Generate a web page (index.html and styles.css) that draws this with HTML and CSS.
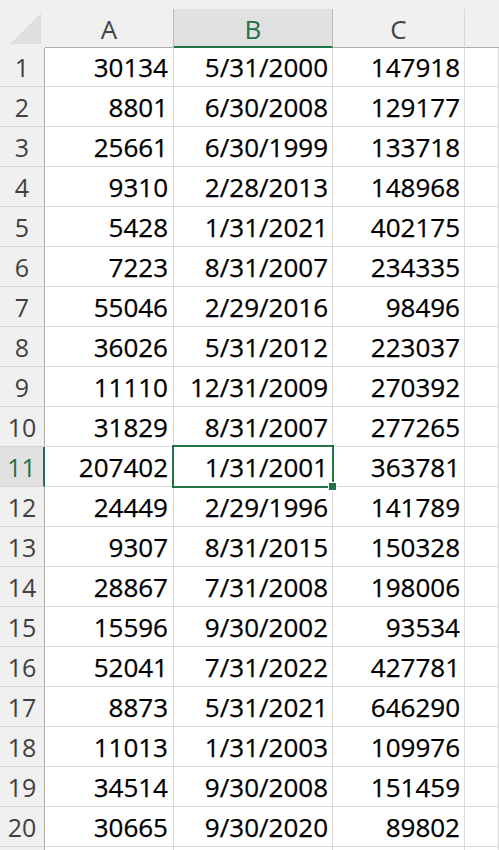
FILE: index.html
```html
<!DOCTYPE html>
<html lang="en">
<head>
<meta charset="utf-8">
<title>Sheet</title>
<link rel="stylesheet" href="styles.css">
</head>
<body>
<div class="sheet">
  <div class="row head">
    <div class="corner"><svg width="45" height="48" viewBox="0 0 45 48"><polygon points="41,13 41,44 10,44" fill="#dfdfdf"/></svg></div>
    <div class="colhead"><div class="hl sep-dark">A</div></div>
    <div class="colhead"><div class="hl sel sep-dark">B</div></div>
    <div class="colhead"><div class="hl">C</div></div>
    <div class="colhead"><div class="hl none"></div></div>
  </div>
  <div class="row first"><div class="rh">1</div><div class="c">30134</div><div class="c">5/31/2000</div><div class="c">147918</div><div class="c"></div></div>
  <div class="row"><div class="rh">2</div><div class="c">8801</div><div class="c">6/30/2008</div><div class="c">129177</div><div class="c"></div></div>
  <div class="row"><div class="rh">3</div><div class="c">25661</div><div class="c">6/30/1999</div><div class="c">133718</div><div class="c"></div></div>
  <div class="row"><div class="rh">4</div><div class="c">9310</div><div class="c">2/28/2013</div><div class="c">148968</div><div class="c"></div></div>
  <div class="row"><div class="rh">5</div><div class="c">5428</div><div class="c">1/31/2021</div><div class="c">402175</div><div class="c"></div></div>
  <div class="row"><div class="rh">6</div><div class="c">7223</div><div class="c">8/31/2007</div><div class="c">234335</div><div class="c"></div></div>
  <div class="row"><div class="rh">7</div><div class="c">55046</div><div class="c">2/29/2016</div><div class="c">98496</div><div class="c"></div></div>
  <div class="row"><div class="rh">8</div><div class="c">36026</div><div class="c">5/31/2012</div><div class="c">223037</div><div class="c"></div></div>
  <div class="row"><div class="rh">9</div><div class="c">11110</div><div class="c">12/31/2009</div><div class="c">270392</div><div class="c"></div></div>
  <div class="row"><div class="rh">10</div><div class="c">31829</div><div class="c">8/31/2007</div><div class="c">277265</div><div class="c"></div></div>
  <div class="row"><div class="rh active">11</div><div class="c">207402</div><div class="c selected">1/31/2001</div><div class="c">363781</div><div class="c"></div></div>
  <div class="row"><div class="rh">12</div><div class="c">24449</div><div class="c">2/29/1996</div><div class="c">141789</div><div class="c"></div></div>
  <div class="row"><div class="rh">13</div><div class="c">9307</div><div class="c">8/31/2015</div><div class="c">150328</div><div class="c"></div></div>
  <div class="row"><div class="rh">14</div><div class="c">28867</div><div class="c">7/31/2008</div><div class="c">198006</div><div class="c"></div></div>
  <div class="row"><div class="rh">15</div><div class="c">15596</div><div class="c">9/30/2002</div><div class="c">93534</div><div class="c"></div></div>
  <div class="row"><div class="rh">16</div><div class="c">52041</div><div class="c">7/31/2022</div><div class="c">427781</div><div class="c"></div></div>
  <div class="row"><div class="rh">17</div><div class="c">8873</div><div class="c">5/31/2021</div><div class="c">646290</div><div class="c"></div></div>
  <div class="row"><div class="rh">18</div><div class="c">11013</div><div class="c">1/31/2003</div><div class="c">109976</div><div class="c"></div></div>
  <div class="row"><div class="rh">19</div><div class="c">34514</div><div class="c">9/30/2008</div><div class="c">151459</div><div class="c"></div></div>
  <div class="row"><div class="rh">20</div><div class="c">30665</div><div class="c">9/30/2020</div><div class="c">89802</div><div class="c"></div></div>
  <div class="row"><div class="rh"></div><div class="c"></div><div class="c"></div><div class="c"></div><div class="c"></div></div>
</div>
</body>
</html>
```
FILE: styles.css
```css
html, body {
  margin: 0;
  padding: 0;
  background: #ffffff;
  overflow: hidden;
  width: 499px;
  height: 850px;
}

.sheet {
  display: flex;
  flex-direction: column;
  font-family: "Open Sans", "Noto Sans", sans-serif;
}

.row {
  display: grid;
  grid-template-columns: 45px 129px 159px 132px 1fr;
  height: 40px;
  flex: none;
}

.row.first {
  height: 39px;
}

.row.head {
  height: 48px;
  background: #f0f0f0;
}

.corner svg {
  display: block;
}

.colhead {
  padding-top: 9px;
}

.hl {
  box-sizing: border-box;
  height: 39px;
  padding-top: 2px;
  border-bottom: 1px solid #ababab;
  border-right: 1px solid #d6d6d6;
  display: flex;
  align-items: center;
  justify-content: center;
  font-size: 26px;
  color: #444444;
}

.hl.sep-dark {
  border-right-color: #bababa;
}

.hl.sel {
  background: #e1e1e1;
  color: #217346;
  border-bottom: 2px solid #217346;
}

.hl.none {
  border-right: none;
}

.rh {
  box-sizing: border-box;
  background: #f0f0f0;
  border-right: 1px solid #ababab;
  border-bottom: 1px solid #d4d4d4;
  display: flex;
  align-items: center;
  justify-content: center;
  font-size: 25px;
  color: #3f3f3f;
}

.rh.active {
  background: #e1e1e1;
  color: #217346;
  border-right: 2px solid #217346;
}

.c {
  box-sizing: border-box;
  border-right: 1px solid #dadada;
  border-bottom: 1px solid #dadada;
  display: flex;
  align-items: center;
  justify-content: flex-end;
  padding-right: 4px;
  font-size: 26px;
  color: #000000;
  white-space: nowrap;
  -webkit-text-stroke: 0.25px #000000;
}

.row .c:nth-child(2) {
  padding-right: 5px;
}

.c.selected {
  position: relative;
}

.c.selected::after {
  content: "";
  position: absolute;
  left: -2px;
  top: -2px;
  right: -2px;
  bottom: -2px;
  border: 2px solid #217346;
  z-index: 2;
}

.c.selected::before {
  content: "";
  position: absolute;
  box-sizing: border-box;
  width: 9px;
  height: 9px;
  right: -5px;
  bottom: -5px;
  background: #217346;
  border: 1px solid #ffffff;
  z-index: 3;
}
```
